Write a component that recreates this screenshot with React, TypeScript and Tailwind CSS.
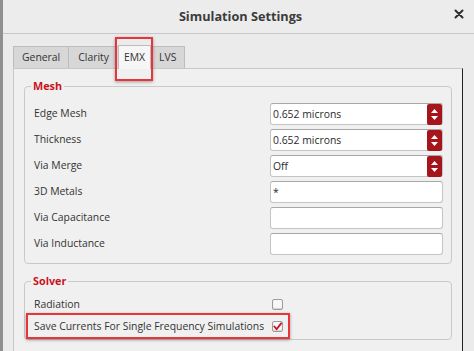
const FONT = { fontFamily: '"Open Sans", "Noto Sans", sans-serif' }

type Row = { label: string; value?: string; spin?: boolean }

const MESH_ROWS: Row[] = [
  { label: "Edge Mesh", value: "0.652 microns", spin: true },
  { label: "Thickness", value: "0.652 microns", spin: true },
  { label: "Via Merge", value: "Off", spin: true },
  { label: "3D Metals", value: "*" },
  { label: "Via Capacitance", value: "" },
  { label: "Via Inductance", value: "" },
]

function SpinButton() {
  return (
    <div className="w-[15px] h-[21px] bg-[#a5161c] rounded-[2px] flex flex-col items-center justify-center gap-[3px]">
      <svg width="7" height="4" viewBox="0 0 7 4">
        <path d="M0 4 L3.5 0 L7 4 Z" fill="#fff" />
      </svg>
      <svg width="7" height="4" viewBox="0 0 7 4">
        <path d="M0 0 L3.5 4 L7 0 Z" fill="#fff" />
      </svg>
    </div>
  )
}

function Field({ value, spin }: { value?: string; spin?: boolean }) {
  return (
    <div className="w-[173px] h-[22px] bg-white border border-[#c4c4c4] border-t-[#a8a8a8] rounded-[3px] flex items-center pl-[2px] justify-between">
      <span className="text-[10.4px] text-[#2a2a2a] leading-none">{value}</span>
      {spin && <SpinButton />}
    </div>
  )
}

function GroupBox({ title, children, className = "" }: { title: string; children: React.ReactNode; className?: string }) {
  return (
    <div className={`relative border border-[#c9c9c9] rounded-[4px] ${className}`}>
      <span className="absolute -top-[9px] left-[6px] px-[2px] bg-[#f0f0f0] text-[10.8px] font-bold text-[#c8141e] leading-[16px]">
        {title}
      </span>
      {children}
    </div>
  )
}

function Checkbox({ checked }: { checked?: boolean }) {
  return (
    <div className="w-[11px] h-[11px] bg-[#f7f7f7] border border-[#9c9c9c] rounded-[2px] flex items-center justify-center shadow-[inset_0_-1px_1px_rgba(0,0,0,0.15)]">
      {checked && (
        <svg width="10" height="9" viewBox="0 0 10 9" className="-mt-[1px]">
          <path d="M1.5 4.5 L4 7.5 L9 1" stroke="#c8141e" strokeWidth="2" fill="none" strokeLinecap="round" strokeLinejoin="round" />
        </svg>
      )}
    </div>
  )
}

export default function App() {
  const tabs = ["General", "Clarity", "EMX", "LVS"]
  return (
    <div className="w-[474px] h-[351px] overflow-hidden bg-[#8f8f8f] flex" style={FONT}>
      <div className="ml-[3px] flex-1 flex flex-col bg-[#ebebeb] rounded-tl-[4px] relative">
        {/* title bar */}
        <div className="h-[34px] shrink-0 border-b border-[#c6c6c6] bg-[#ececec] relative flex items-center justify-center">
          <span className="text-[12.7px] font-bold text-[#3b3b3b] ml-[4px]">Simulation Settings</span>
          <span className="absolute right-[10px] top-[9px]">
            <svg width="10" height="10" viewBox="0 0 10 10">
              <path d="M1.5 1.5 L8.5 8.5 M8.5 1.5 L1.5 8.5" stroke="#2e2e2e" strokeWidth="2" strokeLinecap="round" />
            </svg>
          </span>
        </div>

        {/* tabs */}
        <div className="pl-[10px] pt-[11px] flex items-end h-[34px] shrink-0">
          {tabs.map((t) => {
            const active = t === "EMX"
            return (
              <div
                key={t}
                className={`relative border border-[#bdbdbd] border-b-0 -ml-px first:ml-0 text-[10.4px] text-[#333] flex items-center ${
                  active ? "h-[24px] bg-[#f6f6f6] z-10 -mb-px px-[5px]" : "h-[22px] bg-[#d7d7d7] px-[8px]"
                } ${t === "Clarity" ? "px-[9px]" : ""}`}
              >
                {t}
                {active && (
                  <span className="absolute -left-[4px] -right-[3px] -top-[9px] h-[44px] border-2 border-[#e8353c] shadow-[0_1px_3px_rgba(0,0,0,0.35)] pointer-events-none" />
                )}
              </div>
            )
          })}
        </div>

        {/* pane */}
        <div className="ml-[10px] w-[450px] flex-1 bg-[#f0f0f0] border border-[#c8c8c8] border-r-[1.5px] border-r-[#222] border-b-0 px-[10px] pt-[17px] flex flex-col">
          <GroupBox title="Mesh" className="pt-[16px] pb-[8px] pl-[9px] pr-[8px] flex flex-col gap-[4px]">
            {MESH_ROWS.map((r) => (
              <div key={r.label} className="flex items-center justify-between">
                <span className="text-[10.4px] text-[#333]">{r.label}</span>
                <Field value={r.value} spin={r.spin} />
              </div>
            ))}
          </GroupBox>

          <GroupBox title="Solver" className="mt-[17px] pt-[16px] pb-[6px] pl-[9px] flex flex-col gap-[9px]">
            <div className="flex items-center h-[13px]">
              <span className="w-[238px] text-[10.4px] text-[#333]">Radiation</span>
              <Checkbox />
            </div>
            <div className="relative flex items-center h-[13px]">
              <span className="w-[238px] text-[10.4px] text-[#333] whitespace-nowrap">Save Currents For Single Frequency Simulations</span>
              <Checkbox checked />
              <span className="absolute -left-[8px] w-[264px] -top-[7px] h-[26px] border-2 border-[#e8353c] shadow-[0_1px_3px_rgba(0,0,0,0.35)] pointer-events-none" />
            </div>
          </GroupBox>
        </div>
      </div>
    </div>
  )
}
